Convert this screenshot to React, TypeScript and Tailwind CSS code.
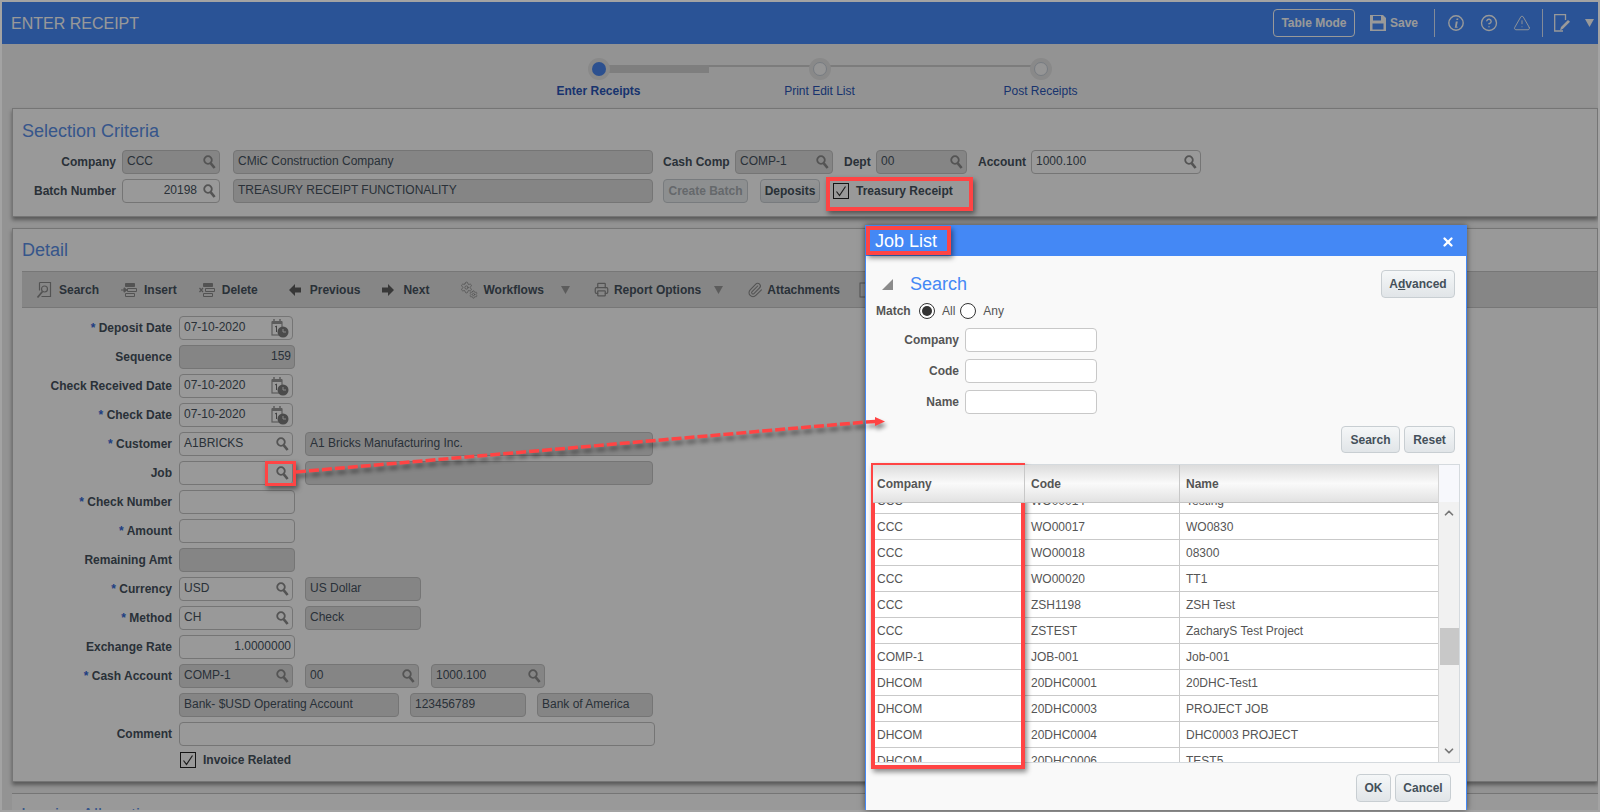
import { ChevronDown, ChevronUp, CircleHelp, Paperclip, Printer, Settings, TriangleAlert, X } from "lucide-react";
import type { ReactNode } from "react";

const Lens = () => (
  <svg viewBox="0 0 13 14" className="h-[14px] w-[13px] shrink-0 text-[#8c8c8c]" fill="none" stroke="currentColor">
    <circle cx="5" cy="5" r="3.8" strokeWidth="1.8" />
    <path d="M7.6 8.2 11.6 13" strokeWidth="2.6" />
  </svg>
);

const CalendarClock = () => (
  <svg viewBox="0 0 18 20" className="h-[20px] w-[18px] shrink-0">
    <rect x="1" y="4" width="10" height="13" fill="none" stroke="#9a9a9a" strokeWidth="1.2" />
    <rect x="1" y="3" width="10" height="3" fill="#9a9a9a" />
    <path d="M3 1v3M9 1v3" stroke="#9a9a9a" strokeWidth="1.5" />
    <path d="M4 9l1.5-1v6" fill="none" stroke="#6e6e6e" strokeWidth="1" />
    <circle cx="12" cy="14" r="5.5" fill="#7d7d7d" />
    <path d="M12 11v3h3" fill="none" stroke="#e6e6e6" strokeWidth="1" />
  </svg>
);

function Field({ className, value, ro, right, lens, date }: { className: string; value?: string; ro?: boolean; right?: boolean; lens?: boolean; date?: boolean }) {
  return (
    <div className={`flex h-[24px] shrink-0 items-center rounded-[4px] border border-[#c3c3c3] pl-[4px] pr-[3px] text-[12px] text-[#46525e] ${ro ? "bg-[#dedede]" : "bg-white"} ${className}`}>
      <span className={`min-w-0 flex-1 whitespace-nowrap pb-[2px] ${right ? "text-right" : ""} ${right && lens ? "pr-[6px]" : ""}`}>{value}</span>
      {lens && <Lens />}
      {date && <CalendarClock />}
    </div>
  );
}

function Label({ className, children, req }: { className: string; children: ReactNode; req?: boolean }) {
  return (
    <div className={`shrink-0 whitespace-nowrap text-right text-[12px] font-bold text-[#46525e] ${className}`}>
      {req && <span className="text-[#3468d8]">* </span>}
      {children}
    </div>
  );
}

function Check({ children }: { children: string }) {
  return (
    <div className="flex items-center gap-[7px]">
      <div className="flex h-[16px] w-[16px] items-center justify-center border border-[#222] bg-white">
        <svg viewBox="0 0 14 14" className="h-[14px] w-[14px]" fill="none" stroke="#333" strokeWidth="1.2">
          <path d="M2.5 7.5 5.5 11.5 11.5 2.5" />
        </svg>
      </div>
      <span className="text-[12px] font-bold text-[#46525e]">{children}</span>
    </div>
  );
}

function FormRow({ label, req, children }: { label?: string; req?: boolean; children: ReactNode }) {
  return (
    <div className="flex h-[24px] items-center">
      <Label className="mr-[7px] w-[159px]" req={req}>
        {label}
      </Label>
      {children}
    </div>
  );
}

function Step({ label, active }: { label: string; active?: boolean }) {
  return (
    <div className="relative flex w-[221px] flex-col items-center pt-[14px]">
      {active && <div className="absolute left-[110px] top-[21px] h-[8px] w-[111px] bg-[#d3d3d3]" />}
      {active && <div className="absolute left-[221px] top-[21px] h-[2px] w-[110px] bg-[#cfcfcf]" />}
      {label === "Print Edit List" && <div className="absolute left-[110px] top-[21px] h-[2px] w-[221px] bg-[#cfcfcf]" />}
      <div className="relative flex h-[22px] w-[22px] items-center justify-center rounded-full bg-[#e4e4e4]">
        <div className={`h-[14px] w-[14px] rounded-full ${active ? "bg-[#4a86ee]" : "border border-[#c6ced8] bg-[#f8f8f8]"}`} />
      </div>
      <div className={`mt-[4px] whitespace-nowrap text-[12px] leading-[14px] text-[#2a56b8] ${active ? "font-bold" : ""}`}>{label}</div>
    </div>
  );
}

function Tool({ icon, label, className }: { icon: ReactNode; label: string; className: string }) {
  return (
    <div className={`flex shrink-0 items-center gap-[7px] ${className}`}>
      <div className="flex h-[18px] w-[16px] items-center justify-center text-[#8a8a8a]">{icon}</div>
      <span className="whitespace-nowrap text-[12px] font-bold text-[#46525e]">{label}</span>
    </div>
  );
}

const Caret = ({ className }: { className: string }) => (
  <svg viewBox="0 0 9 8" className={`h-[8px] w-[9px] shrink-0 ${className}`}>
    <path d="M0 0h9L4.5 8z" fill="currentColor" />
  </svg>
);

const RowsIcon = ({ del }: { del?: boolean }) => (
  <svg viewBox="0 0 16 16" className="h-[16px] w-[16px]" fill="none" stroke="currentColor">
    <path d="M4.5 1.5h9v3h-9z" fill="currentColor" />
    <path d="M6.5 6.5h9v3h-9zM4.5 11.5h9v3h-9z" />
    {del ? <path d="M0.5 6 4 10M4 6l-3.500 4" strokeWidth="1.200" /> : <path d="M0 8h4M3 5.800 6 8 3 10.200z" fill="currentColor" strokeWidth="1" />}
  </svg>
);

const SearchDoc = () => (
  <svg viewBox="0 0 16 18" className="h-[18px] w-[16px]" fill="none" stroke="currentColor">
    <path d="M3.500 1.500h11v14h-9" strokeWidth="1.200" />
    <path d="M3.500 1.500v8" strokeWidth="1.200" />
    <circle cx="8.500" cy="8" r="3" strokeWidth="1.200" />
    <path d="M6.500 10.500 1.500 16.500" strokeWidth="1.800" />
  </svg>
);

const BlockArrow = ({ flip }: { flip?: boolean }) => (
  <svg viewBox="0 0 14 14" className={`h-[14px] w-[14px] ${flip ? "-scale-x-100" : ""}`}>
    <path d="M7 1 1 7l6 6V9.500h6v-5H7z" fill="#5e5e5e" />
  </svg>
);

const Btn = ({ children, className }: { children: ReactNode; className: string }) => (
  <div className={`flex items-center justify-center rounded-[4px] border border-[#c8ced2] bg-linear-to-b from-[#f5f7f8] to-[#e1e5e8] text-[12px] font-bold text-[#44505a] ${className}`}>{children}</div>
);

const Radio = ({ on }: { on?: boolean }) => (
  <div className="flex h-[16px] w-[16px] shrink-0 items-center justify-center rounded-full border border-[#333] bg-white">{on && <div className="h-[10px] w-[10px] rounded-full bg-[#333]" />}</div>
);

const jobs = [
  ["CCC", "WO00014", "Testing"],
  ["CCC", "WO00017", "WO0830"],
  ["CCC", "WO00018", "08300"],
  ["CCC", "WO00020", "TT1"],
  ["CCC", "ZSH1198", "ZSH Test"],
  ["CCC", "ZSTEST", "ZacharyS Test Project"],
  ["COMP-1", "JOB-001", "Job-001"],
  ["DHCOM", "20DHC0001", "20DHC-Test1"],
  ["DHCOM", "20DHC0003", "PROJECT JOB"],
  ["DHCOM", "20DHC0004", "DHC0003 PROJECT"],
  ["DHCOM", "20DHC0006", "TEST5"],
];

function JobDialog() {
  return (
    <div className="absolute left-[865px] top-[225px] flex h-[585px] w-[602px] flex-col border-x border-[#4488f5] bg-[#f9f9f9] shadow-[0_0_6px_rgba(0,0,0,0.5)]">
      <div className="flex h-[31px] shrink-0 items-center justify-between bg-[#4488f5] pl-[9px] pr-[11px] pt-[2px] text-[18px] text-white">
        <span>Job List</span>
        <X className="h-[14px] w-[14px]" strokeWidth={4} />
      </div>
      <div className="mt-[14px] flex h-[28px] items-center pl-[16px] pr-[11px]">
        <svg viewBox="0 0 11 11" className="h-[11px] w-[11px]">
          <path d="M11 0v11H0z" fill="#8b8b8b" />
        </svg>
        <span className="ml-[17px] flex-1 text-[18px] text-[#4488f5]">Search</span>
        <Btn className="h-[28px] w-[74px]">
          <span>
            A<u>d</u>vanced
          </span>
        </Btn>
      </div>
      <div className="mt-[5px] flex h-[16px] items-center pl-[10px] text-[12px] text-[#555]">
        <span className="w-[35px] font-bold">Match</span>
        <div className="ml-[8px]"><Radio on /></div>
        <span className="ml-[7px]">All</span>
        <div className="ml-[5px]"><Radio /></div>
        <span className="ml-[7px]">Any</span>
      </div>
      <div className="mt-[9px] flex flex-col gap-[7px]">
        {["Company", "Code", "Name"].map((n) => (
          <div key={n} className="flex items-center">
            <div className="mr-[6px] w-[93px] text-right text-[12px] font-bold text-[#555]">{n}</div>
            <div className="h-[24px] w-[132px] rounded-[4px] border border-[#c8c8c8] bg-white" />
          </div>
        ))}
      </div>
      <div className="mt-[12px] flex justify-end gap-[4px] pr-[11px]">
        <Btn className="h-[27px] w-[59px]">Search</Btn>
        <Btn className="h-[27px] w-[51px]">Reset</Btn>
      </div>
      <div className="ml-[6px] mt-[11px] flex h-[299px] w-[588px] overflow-hidden border border-[#d5dade] bg-white text-[12px] text-[#555]">
        <div className="flex w-[566px] flex-col">
          <div className="z-10 flex h-[38px] shrink-0 items-center border-b border-[#c4c4c4] bg-linear-to-b from-[#dcdcdc] via-[#fafafa] to-[#e2e2e2] font-bold">
            <div className="flex h-full w-[152px] items-center border-r border-[#c8c8c8] pl-[4px]">Company</div>
            <div className="flex h-full w-[155px] items-center border-r border-[#c8c8c8] pl-[6px]">Code</div>
            <div className="pl-[6px]">Name</div>
          </div>
          <div className="-mt-[15px]">
            {jobs.map((j) => (
              <div key={j[0] + j[1]} className="flex h-[26px] items-center border-b border-[#c9c9c9]">
                <div className="flex h-full w-[152px] items-center border-r border-[#c9c9c9] pl-[4px]">{j[0]}</div>
                <div className="flex h-full w-[155px] items-center border-r border-[#c9c9c9] pl-[6px]">{j[1]}</div>
                <div className="pl-[6px]">{j[2]}</div>
              </div>
            ))}
          </div>
        </div>
        <div className="flex flex-1 flex-col border-l border-[#d5d5d5] bg-[#f1f1f1] text-[#777]">
          <div className="h-[37px] shrink-0 bg-[#f7f8fc]" />
          <div className="flex h-[22px] shrink-0 items-center justify-center">
            <ChevronUp className="h-[14px] w-[14px]" strokeWidth={3} />
          </div>
          <div className="ml-[1px] mt-[104px] h-[37px] w-[19px] shrink-0 bg-[#c8c8c8]" />
          <div className="flex-1" />
          <div className="flex h-[22px] shrink-0 items-center justify-center">
            <ChevronDown className="h-[14px] w-[14px]" strokeWidth={3} />
          </div>
        </div>
      </div>
      <div className="mt-[11px] flex justify-end gap-[4px] pr-[15px]">
        <Btn className="h-[28px] w-[35px]">OK</Btn>
        <Btn className="h-[28px] w-[56px]">Cancel</Btn>
      </div>
    </div>
  );
}

function Callouts() {
  const shadow = "absolute border-[#ff4444] shadow-[2px_3px_5px_rgba(0,0,0,0.45)]";
  return (
    <>
      <div className={`${shadow} left-[826px] top-[177px] h-[34px] w-[147px] border-[4px]`} />
      <div className={`${shadow} left-[265px] top-[461px] h-[25px] w-[31px] border-[3px]`} />
      <div className={`${shadow} left-[866px] top-[226px] h-[29px] w-[85px] border-[4px]`} />
      <div className={`${shadow} left-[871px] top-[463px] h-[306px] w-[154px] border-[4px]`} />
      <svg viewBox="0 0 1600 812" className="pointer-events-none absolute inset-0 h-[812px] w-[1600px] drop-shadow-[2px_4px_2px_rgba(0,0,0,0.45)]">
        <path d="M296 472 866 422l10-.5" fill="none" stroke="#ff4444" strokeWidth="3.500" strokeDasharray="10 3" />
        <path d="M875 417l10 4.500-10 4.500z" fill="#ff4444" />
      </svg>
    </>
  );
}

export default function App() {
  return (
    <div className="relative h-[812px] w-[1600px] overflow-hidden bg-[#a3a3a3] px-[2px] pt-[2px] font-['Liberation_Sans',Arial,sans-serif]">
      <div className="relative flex h-[808px] flex-col overflow-hidden bg-[#f5f5f5]">
        <div className="flex h-[42px] shrink-0 items-center bg-[#468bfa] pl-[9px] pr-[4px] text-white">
          <span className="flex-1 pt-[2px] text-[16px]">ENTER RECEIPT</span>
          <div className="flex h-[28px] w-[82px] items-center justify-center rounded-[4px] border border-white text-[12px] font-bold">Table Mode</div>
          <svg viewBox="0 0 16 16" className="ml-[15px] h-[16px] w-[16px]">
            <path d="M0 0h13l3 3v13H0z" fill="currentColor" />
            <path d="M3 1h8v4.500H3z" fill="#468bfa" />
            <path d="M2.500 8.500h11v6h-11z" fill="#468bfa" />
          </svg>
          <span className="ml-[4px] text-[12px] font-bold">Save</span>
          <div className="ml-[16px] h-[28px] w-px bg-white/80" />
          <svg viewBox="0 0 16 16" className="ml-[13px] h-[16px] w-[16px]" fill="none" stroke="currentColor">
            <circle cx="8" cy="8" r="7.200" strokeWidth="1.400" />
            <path d="M8.600 3.400h1.800l-.3 1.700H8.300zM7.800 6.400h2L8.700 11.800h1.100l-.3 1H6.700l.3-1z" fill="currentColor" stroke="none" />
          </svg>
          <CircleHelp className="ml-[16px] h-[18px] w-[18px]" strokeWidth={1.8} />
          <TriangleAlert className="ml-[15px] h-[18px] w-[18px]" strokeWidth={1.2} />
          <div className="ml-[11px] h-[28px] w-px bg-white/80" />
          <svg viewBox="0 0 16 18" className="ml-[11px] h-[18px] w-[16px]" fill="none" stroke="currentColor">
            <path d="M9 17H.700V.700h10.800V6" strokeWidth="1.300" />
            <path d="M6 16.500 7 13 14 6l2 1.800-7 7z" fill="currentColor" stroke="none" />
          </svg>
          <Caret className="ml-[15px] h-[8px] w-[9px]" />
        </div>

        <div className="flex h-[64px] shrink-0 pl-[486px]">
          <Step label="Enter Receipts" active />
          <Step label="Print Edit List" />
          <Step label="Post Receipts" />
        </div>

        <div className="ml-[10px] h-[109px] shrink-0 border border-[#c4c4c4] bg-white pt-[12px] shadow-[0_3px_4px_rgba(0,0,0,0.4)]">
          <h2 className="h-[21px] pl-[9px] text-[18px] leading-[21px] text-[#5b8fe8]">Selection Criteria</h2>
          <div className="mt-[8px] flex h-[24px] items-center">
            <Label className="mr-[6px] w-[103px]">Company</Label>
            <Field className="w-[98px]" value="CCC" ro lens />
            <Field className="ml-[13px] w-[420px]" value="CMiC Construction Company" ro />
            <Label className="ml-[10px] mr-[6px] w-[66px]">Cash Comp</Label>
            <Field className="w-[98px]" value="COMP-1" ro lens />
            <Label className="ml-[11px] mr-[6px] w-[26px]">Dept</Label>
            <Field className="w-[91px]" value="00" ro lens />
            <Label className="ml-[11px] mr-[6px] w-[47px]">Account</Label>
            <Field className="w-[170px]" value="1000.100" lens />
          </div>
          <div className="mt-[5px] flex h-[24px] items-center">
            <Label className="mr-[6px] w-[103px]">Batch Number</Label>
            <Field className="w-[98px]" value="20198" right lens />
            <Field className="ml-[13px] w-[420px]" value="TREASURY RECEIPT FUNCTIONALITY" ro />
            <div className="ml-[10px] flex h-[24px] w-[85px] items-center justify-center rounded-[4px] border border-[#c8ced2] bg-[#eceff1] text-[12px] font-bold text-[#a8aeb3]">Create Batch</div>
            <Btn className="ml-[12px] h-[24px] w-[60px]">Deposits</Btn>
            <div className="ml-[13px]"><Check>Treasury Receipt</Check></div>
          </div>
        </div>

        <div className="ml-[10px] mt-[11px] h-[554px] shrink-0 border border-[#c4c4c4] bg-white pt-[11px] shadow-[0_3px_4px_rgba(0,0,0,0.4)]">
          <h2 className="h-[21px] pl-[9px] text-[18px] leading-[21px] text-[#5b8fe8]">Detail</h2>
          <div className="ml-[9px] mt-[10px] flex h-[37px] items-center overflow-hidden border-y border-[#c6c6c6] bg-[#e0e0e0] pl-[14px]">
            <Tool icon={<SearchDoc />} label="Search" className="" />
            <Tool icon={<RowsIcon />} label="Insert" className="ml-[22px]" />
            <Tool icon={<RowsIcon del />} label="Delete" className="ml-[22px]" />
            <Tool icon={<BlockArrow />} label="Previous" className="ml-[29px]" />
            <Tool icon={<BlockArrow flip />} label="Next" className="ml-[20px]" />
            <Tool
              icon={
                <div className="relative h-[18px] w-[16px]">
                  <Settings className="absolute left-0 top-0 h-[13px] w-[13px]" strokeWidth={1.5} />
                  <Settings className="absolute bottom-0 right-[-2px] h-[9px] w-[9px]" strokeWidth={2} />
                </div>
              }
              label="Workflows"
              className="ml-[31px]"
            />
            <Caret className="ml-[17px] text-[#9a9a9a]" />
            <Tool icon={<Printer className="h-[15px] w-[15px] translate-x-[3px]" strokeWidth={2} />} label="Report Options" className="ml-[21px]" />
            <Caret className="ml-[13px] text-[#9a9a9a]" />
            <Tool icon={<Paperclip className="h-[16px] w-[16px] translate-x-[3px]" strokeWidth={1.6} />} label="Attachments" className="ml-[21px]" />
            <svg viewBox="0 0 16 16" className="ml-[19px] h-[16px] w-[16px] shrink-0 text-[#8a8a8a]" fill="none" stroke="currentColor">
              <rect x="1" y="1" width="13" height="14" />
            </svg>
          </div>
          <div className="mt-[8px] flex flex-col gap-[5px]">
            <FormRow label="Deposit Date" req><Field className="w-[114px]" value="07-10-2020" date /></FormRow>
            <FormRow label="Sequence"><Field className="w-[116px]" value="159" ro right /></FormRow>
            <FormRow label="Check Received Date"><Field className="w-[114px]" value="07-10-2020" date /></FormRow>
            <FormRow label="Check Date" req><Field className="w-[114px]" value="07-10-2020" date /></FormRow>
            <FormRow label="Customer" req>
              <Field className="w-[114px]" value="A1BRICKS" lens />
              <Field className="ml-[12px] w-[348px]" value="A1 Bricks Manufacturing Inc." ro />
            </FormRow>
            <FormRow label="Job">
              <Field className="w-[114px]" lens />
              <Field className="ml-[12px] w-[348px]" ro />
            </FormRow>
            <FormRow label="Check Number" req><Field className="w-[116px]" /></FormRow>
            <FormRow label="Amount" req><Field className="w-[116px]" /></FormRow>
            <FormRow label="Remaining Amt"><Field className="w-[116px]" ro /></FormRow>
            <FormRow label="Currency" req>
              <Field className="w-[114px]" value="USD" lens />
              <Field className="ml-[12px] w-[116px]" value="US Dollar" ro />
            </FormRow>
            <FormRow label="Method" req>
              <Field className="w-[114px]" value="CH" lens />
              <Field className="ml-[12px] w-[116px]" value="Check" ro />
            </FormRow>
            <FormRow label="Exchange Rate"><Field className="w-[116px]" value="1.0000000" right /></FormRow>
            <FormRow label="Cash Account" req>
              <Field className="w-[114px]" value="COMP-1" ro lens />
              <Field className="ml-[12px] w-[114px]" value="00" ro lens />
              <Field className="ml-[12px] w-[114px]" value="1000.100" ro lens />
            </FormRow>
            <FormRow>
              <Field className="w-[220px]" value="Bank- $USD Operating Account" ro />
              <Field className="ml-[11px] w-[116px]" value="123456789" ro />
              <Field className="ml-[11px] w-[116px]" value="Bank of America" ro />
            </FormRow>
            <FormRow label="Comment"><Field className="w-[476px]" /></FormRow>
          </div>
          <div className="ml-[167px] mt-[5px]"><Check>Invoice Related</Check></div>
        </div>

        <div className="ml-[10px] mt-[11px] flex-1 border-t border-[#c4c4c4] bg-white pl-[9px] pt-[11px]">
          <h2 className="text-[18px] leading-[21px] text-[#5b8fe8]">Invoice Allocation</h2>
        </div>

        <div className="absolute inset-0 bg-black/40" />
      </div>
      <JobDialog />
      <Callouts />
    </div>
  );
}
